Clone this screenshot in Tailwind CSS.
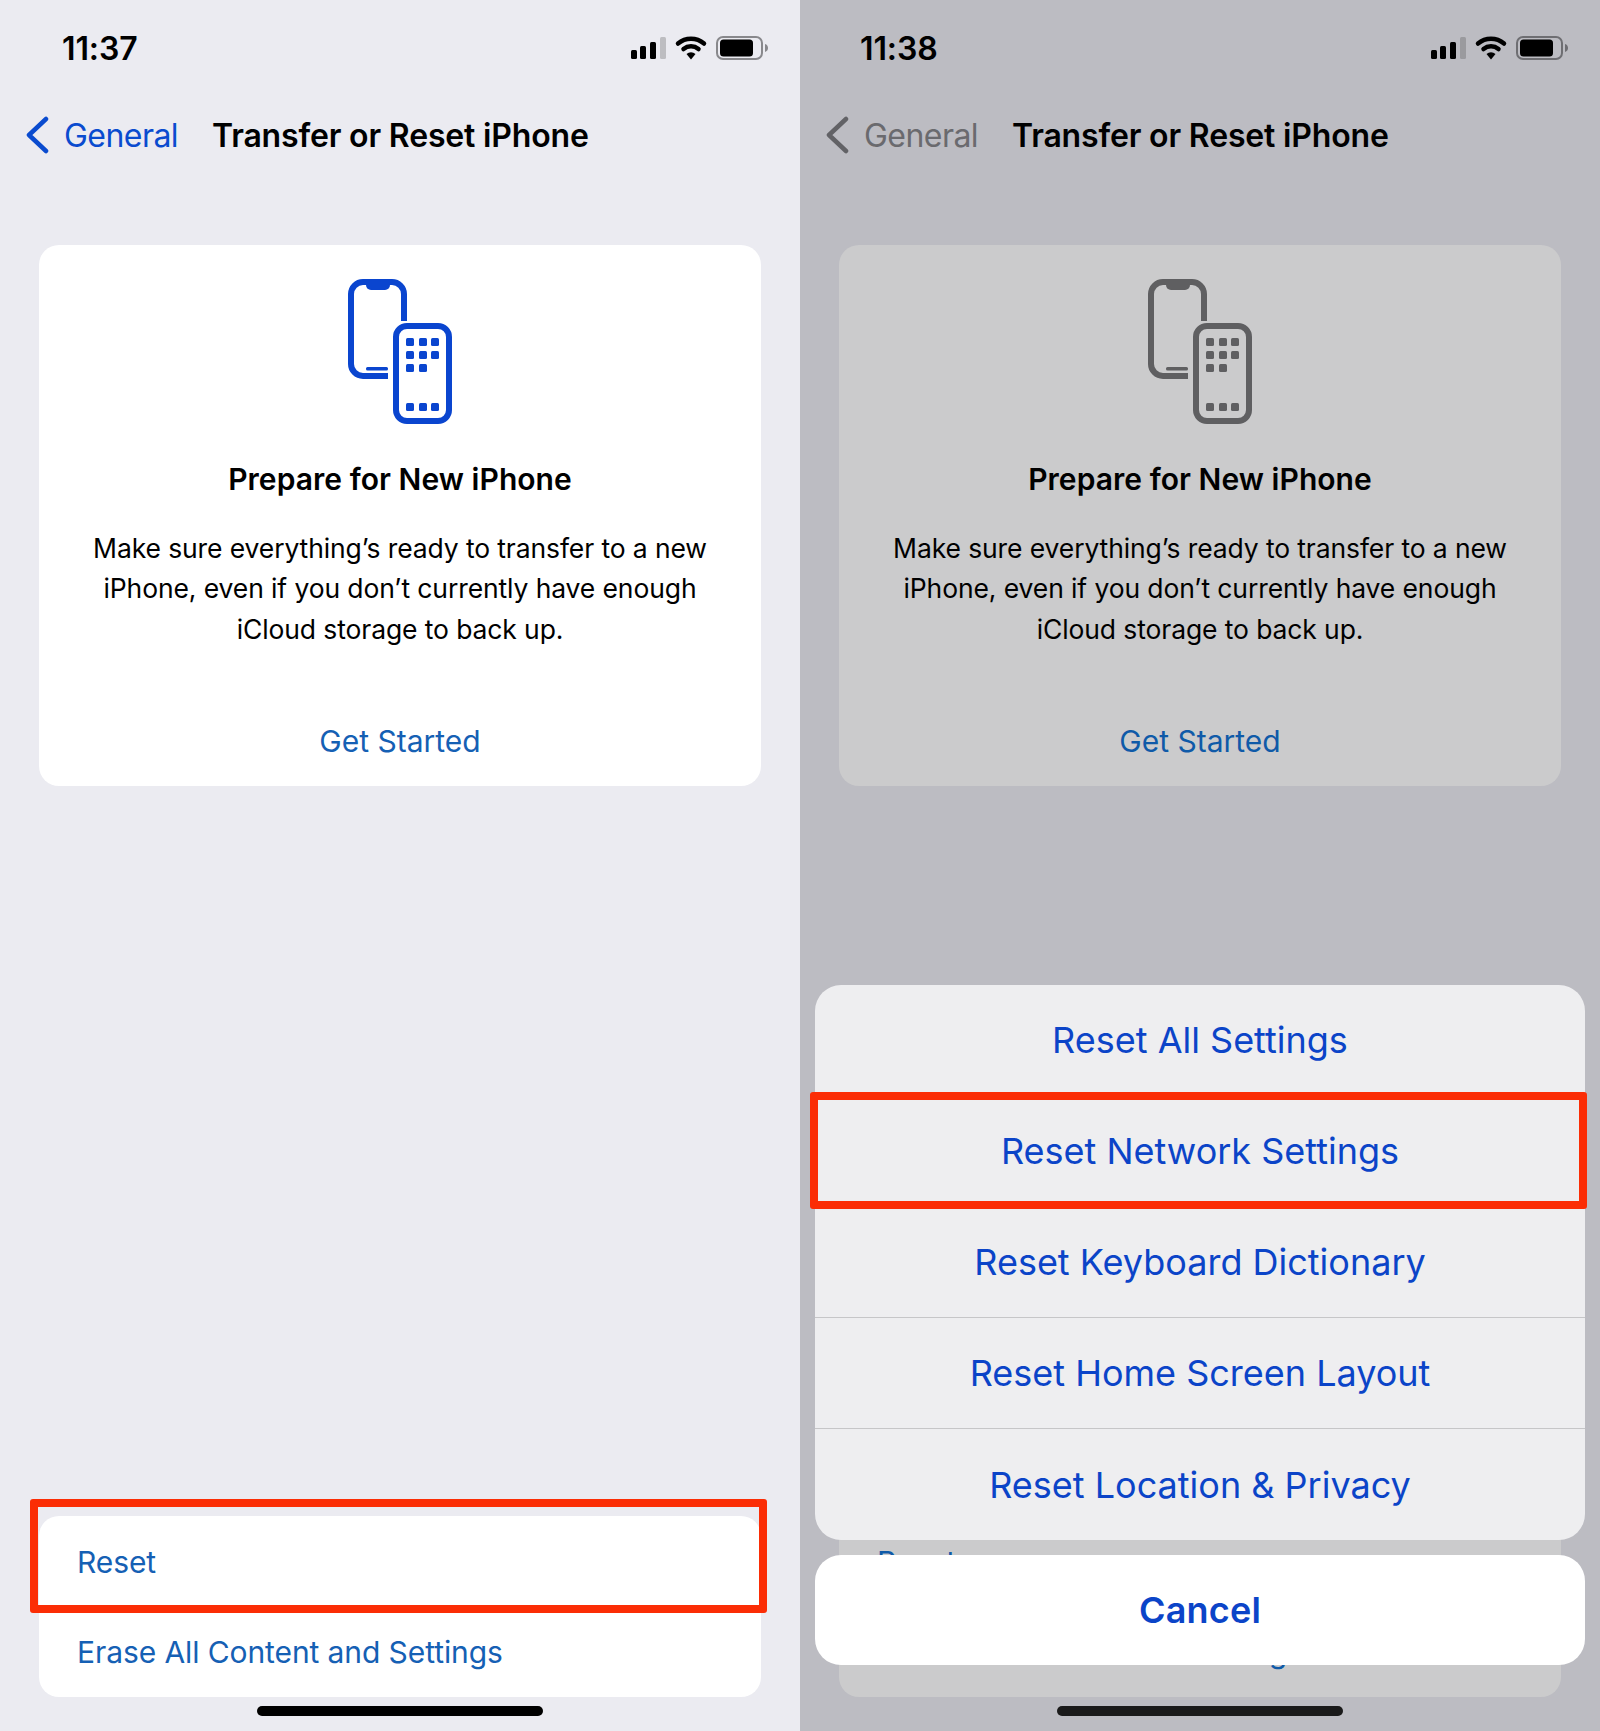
<!DOCTYPE html>
<html lang="en">
<head>
    <meta charset="UTF-8">
    <title>Transfer or Reset iPhone</title>
    <script src="https://cdn.jsdelivr.net/npm/@tailwindcss/browser@4"></script>
</head>
<body class="font-['Inter',sans-serif] text-black">
<div class="flex w-[1600px] h-[1731px] overflow-hidden">

    <!-- Left screen -->
    <div class="relative w-[800px] h-full flex flex-col bg-[#ebebf1]">
        <div class="h-[96px] flex items-center justify-between pl-[62px] pr-[30px]">
            <span class="mt-[2px] text-[32px] font-semibold leading-none tracking-[-0.1px]">11:37</span>
            <svg width="140" height="28" viewBox="630 34 140 28">
                <rect x="631" y="50" width="6" height="9" rx="1.5" fill="#000"/>
                <rect x="640" y="46" width="6" height="13" rx="1.5" fill="#000"/>
                <rect x="650" y="42" width="6" height="17" rx="1.5" fill="#000"/>
                <rect x="660" y="37" width="6" height="22" rx="1.5" fill="#bdbdc1"/>
                <path d="M678 43.5a20 20 0 0 1 26 0" fill="none" stroke="#000" stroke-width="4.500" stroke-linecap="round"/>
                <path d="M683.5 49a12 12 0 0 1 15 0" fill="none" stroke="#000" stroke-width="4.500" stroke-linecap="round"/>
                <path d="M686.5 54a7 7 0 0 1 9 0L691 59.5z" fill="#000"/>
                <rect x="717" y="37" width="45" height="22" rx="6" fill="none" stroke="#88888c" stroke-width="2"/>
                <rect x="720" y="39.5" width="33" height="17" rx="3.5" fill="#000"/>
                <path d="M765 44c2 .6 3 2.200 3 4s-1 3.400-3 4z" fill="#88888c"/>
            </svg>
        </div>
        <div class="h-[78px] flex items-center pl-[25px]">
            <svg width="24" height="38" viewBox="0 0 24 38" fill="none" stroke="#0a4bcf" stroke-width="4.500" stroke-linecap="round" stroke-linejoin="round"><path d="M21 3 4 19l17 16"/></svg>
            <span class="ml-[15px] mt-[2px] text-[32px] leading-none text-[#0a4bcf] tracking-[-0.55px]">General</span>
            <span class="ml-[34px] mt-[2px] text-[32px] font-semibold leading-none tracking-[-0.17px]">Transfer or Reset iPhone</span>
        </div>
        <div class="mt-[71px] mx-[39px] rounded-[20px] bg-white pt-[25px] pb-[25px] flex flex-col items-center text-center">
            <svg width="120" height="160" viewBox="340 270 120 160">
                <path d="M404 321V294a12 12 0 0 0-12-12h-29a12 12 0 0 0-12 12v70a12 12 0 0 0 12 12h25" fill="none" stroke="#0a45cf" stroke-width="6"/>
                <path d="M366 282h24v3a5 5 0 0 1-5 5h-14a5 5 0 0 1-5-5z" fill="#0a45cf"/>
                <rect x="366" y="367" width="22" height="3.500" rx="1.500" fill="#0a45cf"/>
                <rect x="396" y="326" width="53" height="95" rx="11" fill="none" stroke="#0a45cf" stroke-width="6"/>
                <g fill="#0a45cf">
                    <rect x="406" y="338" width="8" height="8" rx="1.500"/><rect x="419" y="338" width="8" height="8" rx="1.500"/><rect x="431" y="338" width="8" height="8" rx="1.500"/>
                    <rect x="406" y="351" width="8" height="8" rx="1.500"/><rect x="419" y="351" width="8" height="8" rx="1.500"/><rect x="431" y="351" width="8" height="8" rx="1.500"/>
                    <rect x="406" y="364" width="8" height="8" rx="1.500"/><rect x="419" y="364" width="8" height="8" rx="1.500"/>
                    <rect x="406" y="403" width="8" height="8" rx="1.500"/><rect x="419" y="403" width="8" height="8" rx="1.500"/><rect x="431" y="403" width="8" height="8" rx="1.500"/>
                </g>
            </svg>
            <h2 class="mt-[29px] text-[30px] font-semibold leading-[40px] tracking-[0.05px]">Prepare for New iPhone</h2>
            <p class="mt-[29px] text-[26.500px] leading-[40.400px] tracking-[-0.11px]">Make sure everything’s ready to transfer to a new<br>iPhone, even if you don’t currently have enough<br>iCloud storage to back up.</p>
            <span class="mt-[72px] text-[30px] leading-[40px] text-[#1560b4]">Get Started</span>
        </div>
        <div class="mt-auto mx-[39px] rounded-[20px] bg-white pl-[38px] text-[30px] text-[#1560b4] tracking-[-0.09px]">
            <div class="h-[91px] pt-[2px] flex items-center">Reset</div>
            <div class="h-[90px] flex items-center">Erase All Content and Settings</div>
        </div>
        <div class="mt-[9px] mb-[15px] self-center w-[286px] h-[10px] rounded-full bg-black"></div>
        <!-- annotation -->
        <div class="absolute left-[30px] top-[1499px] w-[737px] h-[114px] border-[8px] border-[#fb2d05] rounded-[3px]"></div>
    </div>

    <!-- Right screen -->
    <div class="relative w-[800px] h-full flex flex-col bg-[#bcbcc2]">
        <div class="h-[96px] flex items-center justify-between pl-[60px] pr-[30px]">
            <span class="mt-[2px] text-[32px] font-semibold leading-none tracking-[-0.1px]">11:38</span>
            <svg width="140" height="28" viewBox="630 34 140 28">
                <rect x="631" y="50" width="6" height="9" rx="1.5" fill="#000"/>
                <rect x="640" y="46" width="6" height="13" rx="1.5" fill="#000"/>
                <rect x="650" y="42" width="6" height="17" rx="1.5" fill="#000"/>
                <rect x="660" y="37" width="6" height="22" rx="1.5" fill="#9a9a9e"/>
                <path d="M678 43.5a20 20 0 0 1 26 0" fill="none" stroke="#000" stroke-width="4.500" stroke-linecap="round"/>
                <path d="M683.5 49a12 12 0 0 1 15 0" fill="none" stroke="#000" stroke-width="4.500" stroke-linecap="round"/>
                <path d="M686.5 54a7 7 0 0 1 9 0L691 59.5z" fill="#000"/>
                <rect x="717" y="37" width="45" height="22" rx="6" fill="none" stroke="#6e6e72" stroke-width="2"/>
                <rect x="720" y="39.5" width="33" height="17" rx="3.5" fill="#000"/>
                <path d="M765 44c2 .6 3 2.200 3 4s-1 3.400-3 4z" fill="#6e6e72"/>
            </svg>
        </div>
        <div class="h-[78px] flex items-center pl-[25px]">
            <svg width="24" height="38" viewBox="0 0 24 38" fill="none" stroke="#626266" stroke-width="4.500" stroke-linecap="round" stroke-linejoin="round"><path d="M21 3 4 19l17 16"/></svg>
            <span class="ml-[15px] mt-[2px] text-[32px] leading-none text-[#6a6a6e] tracking-[-0.55px]">General</span>
            <span class="ml-[34px] mt-[2px] text-[32px] font-semibold leading-none tracking-[-0.17px]">Transfer or Reset iPhone</span>
        </div>
        <div class="mt-[71px] mx-[39px] rounded-[20px] bg-[#cbcbcc] pt-[25px] pb-[25px] flex flex-col items-center text-center">
            <svg width="120" height="160" viewBox="340 270 120 160">
                <path d="M404 321V294a12 12 0 0 0-12-12h-29a12 12 0 0 0-12 12v70a12 12 0 0 0 12 12h25" fill="none" stroke="#5f5f61" stroke-width="6"/>
                <path d="M366 282h24v3a5 5 0 0 1-5 5h-14a5 5 0 0 1-5-5z" fill="#5f5f61"/>
                <rect x="366" y="367" width="22" height="3.500" rx="1.500" fill="#5f5f61"/>
                <rect x="396" y="326" width="53" height="95" rx="11" fill="none" stroke="#5f5f61" stroke-width="6"/>
                <g fill="#5f5f61">
                    <rect x="406" y="338" width="8" height="8" rx="1.500"/><rect x="419" y="338" width="8" height="8" rx="1.500"/><rect x="431" y="338" width="8" height="8" rx="1.500"/>
                    <rect x="406" y="351" width="8" height="8" rx="1.500"/><rect x="419" y="351" width="8" height="8" rx="1.500"/><rect x="431" y="351" width="8" height="8" rx="1.500"/>
                    <rect x="406" y="364" width="8" height="8" rx="1.500"/><rect x="419" y="364" width="8" height="8" rx="1.500"/>
                    <rect x="406" y="403" width="8" height="8" rx="1.500"/><rect x="419" y="403" width="8" height="8" rx="1.500"/><rect x="431" y="403" width="8" height="8" rx="1.500"/>
                </g>
            </svg>
            <h2 class="mt-[29px] text-[30px] font-semibold leading-[40px] tracking-[0.05px]">Prepare for New iPhone</h2>
            <p class="mt-[29px] text-[26.500px] leading-[40.400px] tracking-[-0.11px]">Make sure everything’s ready to transfer to a new<br>iPhone, even if you don’t currently have enough<br>iCloud storage to back up.</p>
            <span class="mt-[72px] text-[30px] leading-[40px] text-[#0f5aa8]">Get Started</span>
        </div>
        <div class="mt-auto mx-[39px] rounded-[20px] bg-[#cbcbcc] pl-[38px] text-[30px] text-[#0f5aa8] tracking-[-0.09px]">
            <div class="h-[91px] pt-[2px] flex items-center">Reset</div>
            <div class="h-[90px] flex items-center">Erase All Content and Settings</div>
        </div>
        <div class="mt-[9px] mb-[15px] self-center w-[286px] h-[10px] rounded-full bg-[#1a1a1a]"></div>

        <!-- Action sheet -->
        <div class="absolute left-[15px] top-[985px] w-[770px] flex flex-col text-[36px] text-[#0b44c8]">
            <div class="rounded-[26px] bg-[#eeeef0] divide-y divide-[#c6c6c8]">
                <div class="h-[111px] flex items-center justify-center">Reset All Settings</div>
                <div class="h-[111px] flex items-center justify-center">Reset Network Settings</div>
                <div class="h-[111px] flex items-center justify-center">Reset Keyboard Dictionary</div>
                <div class="h-[111px] flex items-center justify-center">Reset Home Screen Layout</div>
                <div class="h-[111px] flex items-center justify-center">Reset Location &amp; Privacy</div>
            </div>
            <div class="mt-[15px] h-[110px] rounded-[26px] bg-white flex items-center justify-center font-semibold tracking-[0.2px]">Cancel</div>
        </div>
        <!-- annotation -->
        <div class="absolute left-[10px] top-[1092px] w-[777px] h-[117px] border-[8px] border-[#fb2d05] rounded-[3px]"></div>
    </div>
</div>
</body>
</html>
